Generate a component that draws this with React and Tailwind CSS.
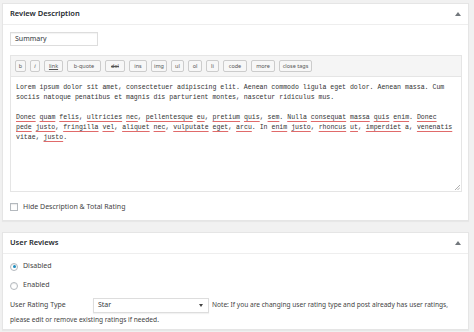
import React from 'react';

const buttons = [
  { label: 'b', w: 'w-[11px]' },
  { label: 'i', w: 'w-[10px]', cls: 'italic' },
  { label: 'link', w: 'w-[19px]', cls: 'underline' },
  { label: 'b-quote', w: 'w-[34px]' },
  { label: 'del', w: 'w-[20px]', cls: 'line-through' },
  { label: 'ins', w: 'w-[18px]' },
  { label: 'img', w: 'w-[16px]' },
  { label: 'ul', w: 'w-[13px]' },
  { label: 'ol', w: 'w-[14px]' },
  { label: 'li', w: 'w-[13px]' },
  { label: 'code', w: 'w-[24px]' },
  { label: 'more', w: 'w-[24px]' },
  { label: 'close tags', w: 'w-[33px]' },
];

// words flagged by the spell checker
const S = ({ children }) => (
  <span className="underline decoration-[#e06a6a] decoration-[1px] underline-offset-[1.5px]">
    {children}
  </span>
);

const Toggle = () => (
  <svg width="6" height="4" viewBox="0 0 6 4" className="block">
    <path d="M0 4 L3 0 L6 4 Z" fill="#72777c" />
  </svg>
);

const PanelHeader = ({ title }) => (
  <div className="h-[21px] flex items-center justify-between pl-[7px] pr-[7px] border-b border-[#eeeeee]">
    <span className="text-[7.5px] font-semibold text-[#23282d]">{title}</span>
    <Toggle />
  </div>
);

const Radio = ({ checked, label }) => (
  <div className="flex items-center gap-[5px] h-[8px]">
    <span className="w-[8px] h-[8px] rounded-full border border-[#b4b9be] bg-white flex items-center justify-center shadow-[inset_0_1px_1px_rgba(0,0,0,0.08)]">
      {checked && <span className="w-[3px] h-[3px] rounded-full bg-[#1e8cbe]" />}
    </span>
    <span className="text-[7px] text-[#444]">{label}</span>
  </div>
);

export default function App() {
  return (
    <div className="w-[474px] h-[332px] overflow-hidden bg-[#f1f1f1] pl-[2px] pt-[3px] font-['Noto_Sans',sans-serif]">
      {/* Review Description */}
      <div className="w-[467px] bg-white border border-[#e5e5e5] shadow-[0_1px_1px_rgba(0,0,0,0.04)]">
        <PanelHeader title="Review Description" />
        <div className="pl-[7px] pr-[6px] pt-[7px] pb-[7px]">
          <div className="w-[88px] h-[14px] border border-[#dddddd] flex items-center px-[4px] text-[7px] text-[#32373c] shadow-[inset_0_1px_1px_rgba(0,0,0,0.05)]">
            Summary
          </div>

          <div className="mt-[9px] h-[21px] bg-[#f5f5f5] border border-[#e5e5e5] border-b-0 pl-[4px] flex items-center gap-[4px]">
            {buttons.map((b) => (
              <span
                key={b.label}
                className={`${b.w} h-[12px] flex items-center justify-center border border-[#cccccc] bg-[#f7f7f7] rounded-[2px] text-[5.5px] text-[#555555] ${b.cls || ''}`}
              >
                {b.label}
              </span>
            ))}
          </div>

          <div className="relative h-[116px] border border-[#e5e5e5] bg-white pl-[5px] pt-[6px] font-['Liberation_Mono',monospace] text-[6.55px] leading-[10px] text-[#333333] whitespace-pre">
            <div>Lorem ipsum dolor sit amet, consectetuer adipiscing elit. Aenean commodo ligula eget dolor. Aenean massa. Cum</div>
            <div>sociis natoque penatibus et magnis dis parturient montes, nascetur ridiculus mus.</div>
            <div>&nbsp;</div>
            <div>
              <S>Donec</S> <S>quam</S> <S>felis</S>, <S>ultricies</S> <S>nec</S>, <S>pellentesque</S> <S>eu</S>, <S>pretium</S> <S>quis</S>, <S>sem</S>. <S>Nulla</S> <S>consequat</S> <S>massa</S> <S>quis</S> <S>enim</S>. <S>Donec</S>
            </div>
            <div>
              <S>pede</S> <S>justo</S>, <S>fringilla</S> <S>vel</S>, <S>aliquet</S> <S>nec</S>, <S>vulputate</S> <S>eget</S>, <S>arcu</S>. In <S>enim</S> <S>justo</S>, <S>rhoncus</S> <S>ut</S>, <S>imperdiet</S> a, <S>venenatis</S>
            </div>
            <div>
              vitae, <S>justo</S>.
            </div>
            <svg width="6" height="6" viewBox="0 0 6 6" className="absolute right-[1px] bottom-[1px]">
              <path d="M1 6 L6 1 M3.5 6 L6 3.5" stroke="#999" strokeWidth="0.8" />
            </svg>
          </div>

          <div className="mt-[10px] flex items-center gap-[5px]">
            <span className="w-[8px] h-[8px] border border-[#b4b9be] bg-white shadow-[inset_0_1px_1px_rgba(0,0,0,0.08)]" />
            <span className="text-[7px] text-[#444]">Hide Description &amp; Total Rating</span>
          </div>
        </div>
      </div>

      {/* User Reviews */}
      <div className="mt-[11px] w-[467px] bg-white border border-[#e5e5e5] shadow-[0_1px_1px_rgba(0,0,0,0.04)]">
        <PanelHeader title="User Reviews" />
        <div className="pl-[7px] pr-[6px] pt-[9px] pb-[2px]">
          <Radio checked label="Disabled" />
          <div className="mt-[11px]">
            <Radio label="Enabled" />
          </div>
          <div className="mt-[8px] flex items-center h-[15px] text-[#444]">
            <span className="w-[83px] text-[7px]">User Rating Type</span>
            <span className="flex w-[116px] h-[15px] border border-[#dddddd] items-center justify-between pl-[4px] pr-[5px] text-[7px] text-[#32373c] shadow-[0_1px_1px_rgba(0,0,0,0.05)]">
              <span>Star</span>
              <svg width="4" height="3" viewBox="0 0 4 3">
                <path d="M0 0 L4 0 L2 3 Z" fill="#444" />
              </svg>
            </span>
            <span className="ml-[3px] text-[6.6px] whitespace-nowrap">
              Note: If you are changing user rating type and post already has user ratings,
            </span>
          </div>
          <div className="text-[6.6px] leading-[14px] text-[#444]">
            please edit or remove existing ratings if needed.
          </div>
        </div>
      </div>
    </div>
  );
}
